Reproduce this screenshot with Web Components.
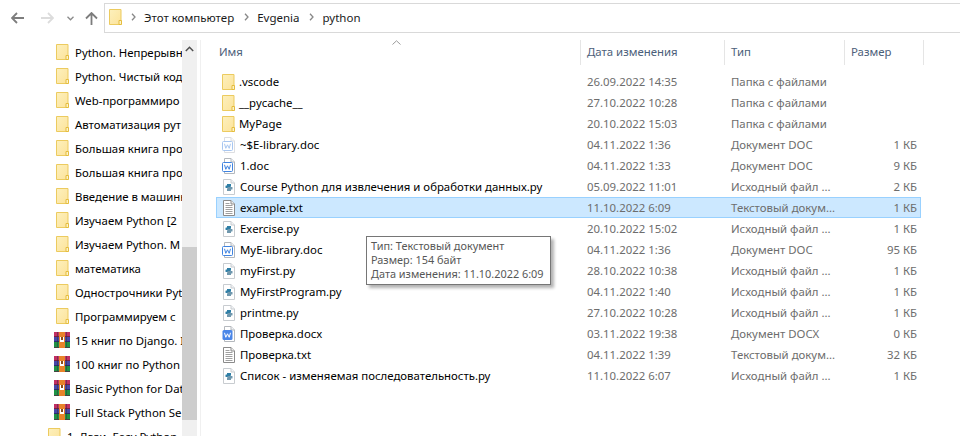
<!DOCTYPE html>
<html><head><meta charset="utf-8"><style>
html,body{margin:0;padding:0;background:#fff}
body{font:12px "Noto Sans","Open Sans",sans-serif;color:#000;width:960px;height:436px;overflow:hidden}
</style></head><body>
<fx-window>
  <fx-toolbar slot="bar">
    <fx-crumb>Этот компьютер</fx-crumb><fx-crumb>Evgenia</fx-crumb><fx-crumb>python</fx-crumb>
  </fx-toolbar>
  <fx-tree slot="tree">
    <fx-node>Python. Непрерывн</fx-node>
    <fx-node>Python. Чистый код</fx-node>
    <fx-node>Web-программиро</fx-node>
    <fx-node>Автоматизация рут</fx-node>
    <fx-node>Большая книга про</fx-node>
    <fx-node>Большая книга про</fx-node>
    <fx-node>Введение в машинн</fx-node>
    <fx-node>Изучаем Python [2</fx-node>
    <fx-node>Изучаем Python. М</fx-node>
    <fx-node>математика</fx-node>
    <fx-node>Однострочники Pyt</fx-node>
    <fx-node>Программируем с</fx-node>
    <fx-node icon="rar">15 книг по Django. I</fx-node>
    <fx-node icon="rar">100 книг по Python</fx-node>
    <fx-node icon="rar">Basic Python for Dat</fx-node>
    <fx-node icon="rar">Full Stack Python Se</fx-node>
    <fx-node up>1. Лази. Easy Python</fx-node>
  </fx-tree>
  <fx-list slot="list">
    <fx-row icon="folder" date="26.09.2022 14:35" type="Папка с файлами">.vscode</fx-row>
    <fx-row icon="folder" date="27.10.2022 10:28" type="Папка с файлами">__pycache__</fx-row>
    <fx-row icon="folder" date="20.10.2022 15:03" type="Папка с файлами">MyPage</fx-row>
    <fx-row icon="docfade" date="04.11.2022 1:36" type="Документ DOC" size="1 КБ">~$E-library.doc</fx-row>
    <fx-row icon="doc" date="04.11.2022 1:33" type="Документ DOC" size="9 КБ">1.doc</fx-row>
    <fx-row icon="py" date="05.09.2022 11:01" type="Исходный файл ..." size="2 КБ">Course Python для извлечения и обработки данных.py</fx-row>
    <fx-row icon="txt" selected date="11.10.2022 6:09" type="Текстовый докум..." size="1 КБ">example.txt</fx-row>
    <fx-row icon="py" date="20.10.2022 15:02" type="Исходный файл ..." size="1 КБ">Exercise.py</fx-row>
    <fx-row icon="doc" date="04.11.2022 1:36" type="Документ DOC" size="95 КБ">MyE-library.doc</fx-row>
    <fx-row icon="py" date="28.10.2022 10:38" type="Исходный файл ..." size="1 КБ">myFirst.py</fx-row>
    <fx-row icon="py" date="04.11.2022 1:40" type="Исходный файл ..." size="1 КБ">MyFirstProgram.py</fx-row>
    <fx-row icon="py" date="27.10.2022 10:28" type="Исходный файл ..." size="1 КБ">printme.py</fx-row>
    <fx-row icon="docx" date="03.11.2022 19:38" type="Документ DOCX" size="0 КБ">Проверка.docx</fx-row>
    <fx-row icon="txt" date="04.11.2022 1:39" type="Текстовый докум..." size="32 КБ">Проверка.txt</fx-row>
    <fx-row icon="py" date="11.10.2022 6:07" type="Исходный файл ..." size="1 КБ">Список - изменяемая последовательность.ру</fx-row>
    <fx-tip slot="tip"><div>Тип: Текстовый документ</div><div>Размер: 154 байт</div><div>Дата изменения: 11.10.2022 6:09</div></fx-tip>
  </fx-list>
</fx-window>
<script>
const FONT_STACK='"Noto Sans","Open Sans",sans-serif';
const TEXT_SIZE='11.4px';
function page(inner,op){return `<svg width="14" height="16" viewBox="0 0 14 16" style="display:block"${op?` opacity="${op}"`:''}><path d="M2.5.5h6.5l3.5 3.5v11.5h-10z" fill="#fff" stroke="#b4b8bd"/><path d="M9 .5v3.5h3.5" fill="#f1f3f5" stroke="#b4b8bd"/>${inner}</svg>`;}
const ICONS={
 folder:`<svg width="13" height="16" viewBox="0 0 13 16" style="display:block"><defs><linearGradient id="f" x1="0" y1="0" x2="1" y2="1"><stop offset="0" stop-color="#fdf0bd"/><stop offset="1" stop-color="#fce39a"/></linearGradient></defs><path d="M.5.5h11.500v15h-11.500z" fill="url(#f)" stroke="#eccb5f"/><path d="M10 11.500h2.500v4h-2.500z" fill="#fdf3c9" stroke="#e5bd3e"/></svg>`,
 doc:page(`<rect x=".5" y="4.5" width="10" height="9" rx="1" fill="#fff" stroke="#3f83e0"/><polyline points="2.5,6.8 3.8,11.3 5.5,7.8 7.2,11.3 8.5,6.8" fill="none" stroke="#3f83e0" stroke-width="1"/>`),
 docfade:page(`<rect x=".5" y="4.5" width="10" height="9" rx="1" fill="#fff" stroke="#3f83e0"/><polyline points="2.5,6.8 3.8,11.3 5.5,7.8 7.2,11.3 8.5,6.8" fill="none" stroke="#3f83e0" stroke-width="1"/>`,'.45'),
 docx:page(`<rect x=".5" y="4" width="10" height="10" rx="1.5" fill="#4a86e8"/><polyline points="2.5,6.8 3.8,11.3 5.5,7.8 7.2,11.3 8.5,6.8" fill="none" stroke="#fff" stroke-width="1"/>`),
 py:`<svg width="14" height="16" viewBox="0 0 14 16" style="display:block"><path d="M1.500.5h7.500l3.500 3.500v11.500h-11z" fill="#fff" stroke="#c8ccd0"/><path d="M9 .5v3.500h3.500" fill="#f1f3f5" stroke="#c8ccd0"/><rect x="5" y="5" width="4" height="2.500" fill="#2f7fa6"/><rect x="3.500" y="6.500" width="5" height="2.500" rx=".5" fill="#2f7fa6"/><rect x="5.500" y="8" width="5" height="2.500" rx=".5" fill="#6f97ad"/><rect x="5" y="9.500" width="4" height="2.500" fill="#6f97ad"/></svg>`,
 txt:`<svg width="14" height="16" viewBox="0 0 14 16" style="display:block"><path d="M1.500.5h7.500l3.500 3.500v11.500h-11z" fill="#fff" stroke="#8b8b8b"/><path d="M9 .5v3.500h3.500" fill="#eee" stroke="#8b8b8b"/><path d="M3.500 3.500h4M3.500 5.500h7M3.500 7.500h7M3.500 9.500h7M3.500 11.500h7M3.500 13.500h7" stroke="#a0a0a0" fill="none"/></svg>`,
 rar:`<svg width="16" height="16" viewBox="0 0 16 16" style="display:block"><rect width="16" height="5" y="0" fill="#c22f63"/><rect width="16" height="5" y="5" fill="#4747a8"/><rect width="16" height="5" y="10" fill="#1f9245"/><rect y="15" width="16" height="1" fill="#444"/><rect x="0" y="4" width="16" height="1" fill="#7b1f44"/><rect x="0" y="9" width="16" height="1" fill="#2b2b70"/><rect x="3" width="1" height="15" fill="#333" opacity=".5"/><rect x="12" width="1" height="15" fill="#333" opacity=".5"/><rect x="5" width="6" height="16" fill="#e8832a"/><rect x="6" y="5" width="4" height="5" fill="#fff"/><rect x="7" y="5" width="2" height="3" fill="#8a4a1a"/></svg>`
};
function def(name,css,html){
  customElements.define(name,class extends HTMLElement{
    constructor(){super();this.attachShadow({mode:'open'});}
    connectedCallback(){this.shadowRoot.innerHTML=`<style>${css}</style>${typeof html==='function'?html(this):html}`;}
  });
}
def('fx-window',`:host{display:grid;grid-template-rows:40px 396px;width:960px;height:436px;overflow:hidden;font-family:${FONT_STACK};font-size:${TEXT_SIZE}}
 .main{display:grid;grid-template-columns:201px 759px;min-height:0;overflow:hidden}`,
 `<slot name="bar"></slot><div class="main"><slot name="tree"></slot><slot name="list"></slot></div>`);
def('fx-toolbar',`:host{display:flex;align-items:flex-start;padding-top:3px;box-sizing:border-box;height:40px;font-size:11.5px}
 .nav{width:104px;height:30px;flex:none;display:flex;align-items:center}
 .nav svg{display:block;flex:none}
 .addr{flex:1;height:30px;box-sizing:border-box;border:1px solid #d9d9d9;border-right:0;display:flex;align-items:center;padding:0 0 2px 4px}
 .addr .fold{margin-right:-1px}`,
 ()=>`<div class="nav">
  <svg style="margin-left:11px" width="13" height="12" viewBox="0 0 13 12"><path d="M6 1 1 6l5 5M1 6h12" fill="none" stroke="#7d7d7d" stroke-width="1.800"/></svg>
  <svg style="margin-left:17px" width="13" height="12" viewBox="0 0 13 12"><path d="M7 1l5 5-5 5M12 6H0" fill="none" stroke="#dcdcdc" stroke-width="1.800"/></svg>
  <svg style="margin-left:13px" width="7" height="5" viewBox="0 0 7 5"><path d="M.5.800 3.500 3.800 6.500.800" fill="none" stroke="#8a8a8a" stroke-width="1.300"/></svg>
  <svg style="margin-left:11px" width="13" height="13" viewBox="0 0 13 13"><path d="M1 6.500l5.500-5.500 5.500 5.500M6.500 1v12" fill="none" stroke="#7d7d7d" stroke-width="1.800"/></svg>
 </div><div class="addr"><span class="fold">${ICONS.folder}</span><slot></slot></div>`);
def('fx-crumb',`:host{display:flex;align-items:center;white-space:nowrap;color:#1a1a1a}
 svg{display:block;margin:0 8px 0 10px;flex:none}`,
 `<svg width="5" height="8" viewBox="0 0 5 8"><path d="M1 .8 4 4 1 7.200" fill="none" stroke="#888" stroke-width="1.300"/></svg><slot></slot>`);
def('fx-tree',`:host{display:grid;grid-template-columns:182px 15px 3px;height:396px;overflow:hidden;border-right:1px solid #f0f0f0;box-sizing:border-box;width:201px}
 .items{overflow:hidden;min-width:0}
 .bar{background:#f0f0f0;display:flex;flex-direction:column}
 .arrow{height:207px;flex:none}
 .arrow svg{display:block;margin:6px auto 0}
 .thumb{height:173px;background:#cdcdcd;flex:none}`,
 `<div class="items"><slot></slot></div><div class="bar"><div class="arrow"><svg width="9" height="6" viewBox="0 0 9 6"><path d="M.8 5 4.500 1.300 8.200 5" fill="none" stroke="#505050" stroke-width="1.500"/></svg></div><div class="thumb"></div></div><div></div>`);
def('fx-node',`:host{display:flex;align-items:center;height:24px;white-space:nowrap;color:#000;box-sizing:border-box}
 .i{flex:none}`,
 h=>{const ic=h.getAttribute('icon')||'folder';const up=h.hasAttribute('up');
  const pad=up?48:(ic==='rar'?54:56),gap=up?6:(ic==='rar'?5:6);
  return `<style>:host{padding-left:${pad}px;gap:${gap}px}</style><span class="i">${ICONS[ic]}</span><slot></slot>`;});
def('fx-list',`:host{display:block;position:relative;height:396px;overflow:hidden;padding-left:15px;box-sizing:border-box}
 .head{display:grid;grid-template-columns:364px 144px 120px 80px;height:25px;color:#4c607a;width:708px;margin-bottom:6px}
 .head div{padding-left:6px;line-height:24px;border-left:1px solid #e5e5e5;height:25px;position:relative}
 .head div:first-child{border-left:0;padding-left:3px}
 .head div:last-child{border-right:1px solid #e5e5e5;box-sizing:border-box}
 .sort{position:absolute;left:176px;top:0}`,
 `<div class="head"><div>Имя<svg class="sort" width="9" height="5" viewBox="0 0 9 5"><path d="M.5 4.500 4.500.800 8.500 4.500" fill="none" stroke="#9a9a9a"/></svg></div><div>Дата изменения</div><div>Тип</div><div>Размер</div></div><slot></slot><slot name="tip"></slot>`);
def('fx-row',`:host{display:grid;grid-template-columns:364px 144px 120px 77px;height:21px;width:705px;box-sizing:border-box;align-items:center;white-space:nowrap;color:#6d6d6d}
 :host([selected]){background:#cce8ff;box-shadow:inset 0 0 0 1px #99d1ff}
 .n{display:flex;align-items:center;color:#000;padding-left:6px;gap:4px;overflow:hidden}
 .d,.t{padding-left:7px}
 .s{text-align:right;padding-right:4px}`,
 h=>{const a=k=>h.getAttribute(k)||'';return `<div class="n">${ICONS[a('icon')]}<slot></slot></div><div class="d">${a('date')}</div><div class="t">${a('type')}</div><div class="s">${a('size')}</div>`;});
def('fx-tip',`:host{position:absolute;left:165px;top:196px;width:185px;height:49px;box-sizing:border-box;background:#fff;border:1px solid #767676;box-shadow:3px 3px 3px rgba(0,0,0,.3);color:#575757;padding:2px 4px;line-height:14px;font-size:10.9px;white-space:nowrap}`,`<slot></slot>`);
</script>
</body></html>
